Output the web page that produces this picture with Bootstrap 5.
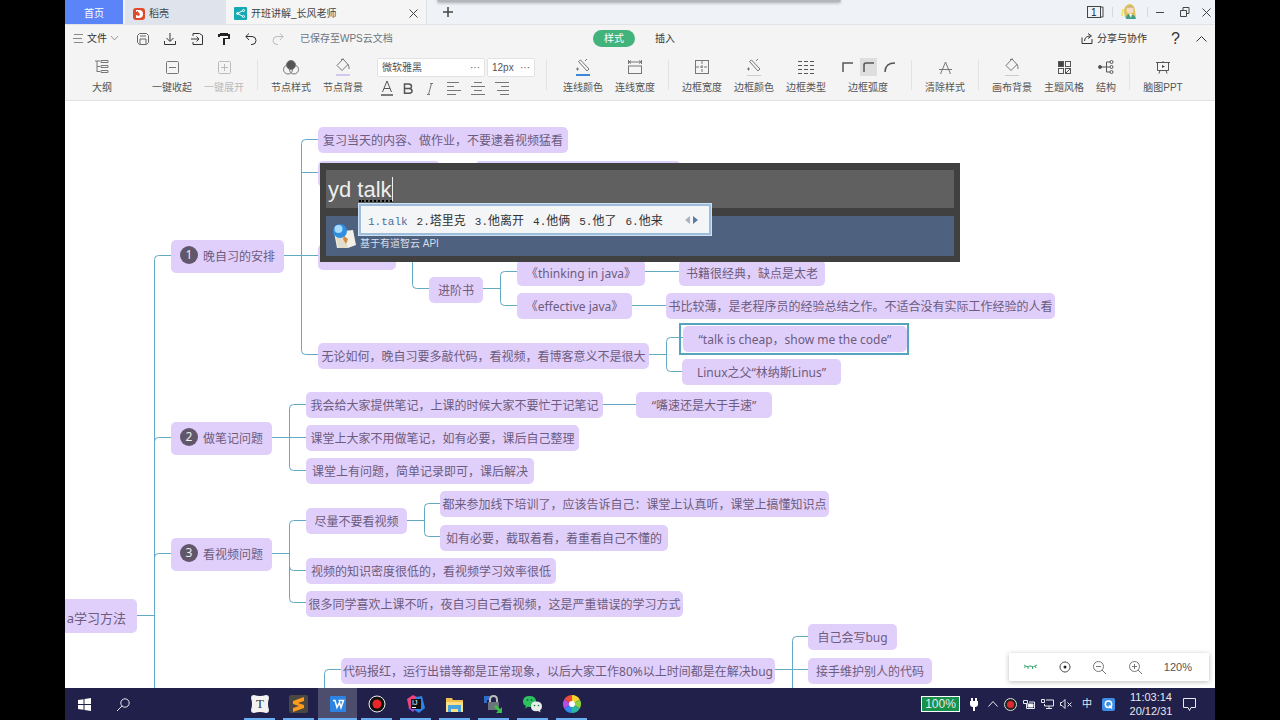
<!DOCTYPE html>
<html lang="zh-CN">
<head>
<meta charset="utf-8">
<meta name="viewport" content="width=device-width, initial-scale=1">
<title>开班讲解_长风老师</title>
<link href="https://cdn.jsdelivr.net/npm/bootstrap@5.3.0/dist/css/bootstrap.min.css" rel="stylesheet">
<style>
body{background:#000;font:10px/14px "Liberation Sans","Noto Sans CJK SC",sans-serif;color:#555}
.desktop{padding:0 65px}
button{background:none;border:0;padding:0;color:inherit;font:inherit}
svg{display:block;flex:none;overflow:visible}
svg:not([stroke]){stroke:currentColor}
svg:not([fill]){fill:none}
/* window title bar */
.titlebar{height:24px;background:#eff3f8;color:#444}
.home-tab{width:58px;background:#5b84f8;color:#fff;padding-top:3px}
.doc-tab{width:101px;background:#dfe4ec;margin-left:2px;padding:3px 0 0 8px}
.doc-tab.active{width:201px;background:#f5f5f5;margin-left:0;padding:3px 8px 0;border-right:1px solid #dde1e6}
.behind-edge{position:absolute;left:372px;top:0;width:404px;height:2px;background:#b4b7ba;border-radius:0 0 4px 4px;box-shadow:0 1px 3px #999}
.rule{width:1px;height:10px;background:#d5d8dc}
/* menu row */
.menubar{height:28px;background:#f4f4f4;color:#333;border-top:1px solid #e0e3e7}
.menubar .side{flex:1 1 0}
.quick{gap:15px;padding-left:3px}
.pill{width:42px;height:17px;border-radius:9px;background:#43b37c;color:#fff}
/* toolbar */
.toolbar{height:49px;background:#f4f4f4;border-bottom:1px solid #e2e2e2;padding-left:11px}
.tool{width:52px;padding-top:6px;flex:none;white-space:nowrap}
.tool.outline-tool{margin-right:18px}
.tool.off{color:#bbb}
.tool .glyph{height:18px;margin-bottom:5px;display:flex;align-items:center;justify-content:center}
.tool.wide{width:72px}.tool.slim{width:32px}
.divide{width:15px;flex:none;display:flex;justify-content:center}
.divide::before{content:"";width:1px;height:30px;margin-top:8px;background:#e3e3e3}
.divide.wide{width:22px}
.fonts{width:158px;margin-left:8px;padding-top:6px;flex:none}
.format-row{gap:10px}
.field{height:19px;background:#fff;border:1px solid #e2e2e2;border-radius:2px;padding:0 4px}
.field select{appearance:none;border:0;background:none;font:inherit;color:#555;min-width:0;padding:0;flex:1}
.field.big{width:108px}.field.small-box{width:48px}
/* mind map canvas */
.canvas{background:#fff;min-height:0}
.links{position:absolute;left:0;top:0;width:1150px;height:587px;color:#62a9c4}
.node{position:absolute;left:var(--x);top:var(--y);width:var(--w);height:26px;border-radius:5px;background:#e1cffb;color:#6c5c7d;font:12px/28px "Noto Sans","Noto Sans CJK SC",sans-serif;text-align:center;white-space:nowrap}
.node.topic{height:33px;line-height:34px;display:flex;align-items:center;justify-content:center;gap:5px}
.node.root{height:34px;line-height:38px;font-size:13px;border-radius:0 5px 5px 0;text-align:right;padding-right:11px;overflow:hidden}
.num{width:18px;height:18px;border-radius:50%;background:#62566b;color:#eee;line-height:18px;margin-bottom:4px}
.node.selected::after{content:"";position:absolute;inset:-3px -2px -3px -4px;border:2px solid #55a3bf}
.zoombar{position:absolute;right:6px;bottom:7px;width:200px;height:28px;background:#fff;box-shadow:0 1px 5px #bbb;padding:0 17px 0 15px;font-size:11px}
/* launcher */
.launcher{position:absolute;left:255px;top:62px;width:640px;background:#404040;padding:7px 6px 6px}
.query{height:38px;background:#606060;position:relative;margin-bottom:8px}
.query input{width:100%;height:38px;border:0;outline:0;background:none;color:#eee;font-size:22px;padding:2px 2px 0}
.compose{position:absolute;left:33px;top:30px;width:33px;border-bottom:2px dotted #000}
.caret{position:absolute;left:66px;top:7px;width:1px;height:24px;background:#eee}
.result{height:40px;background:#4e617f;color:#d8deea;padding-left:5px}
.result .info{align-self:flex-end;padding-bottom:5px}
.ime{position:absolute;left:38px;top:40px;width:354px;height:33px;background:#f4f5f7;border:1px solid #cfe2f5;outline:2px solid #9dbddb;outline-offset:-3px;padding:0 13px 0 9px;color:#333;font:12px "Noto Sans CJK SC",sans-serif;gap:9px;white-space:nowrap}
.ime b{font:11px "Liberation Mono",monospace}
.ime .first{color:#4a6f9c}
/* taskbar */
.taskbar{height:32px;background:#20204a;color:#e8e8f0;flex:none}
.task{width:39px;height:32px;display:flex;align-items:center;justify-content:center;position:relative}
.task.open::after{content:"";position:absolute;left:4px;right:4px;bottom:0;height:2px;background:#69aef2}
.task.current{background:#4d4d6e}.task.current::after{left:0;right:0}
.start-gap{margin-right:97px}
.tray{gap:6px;padding-right:19px}
.battery{width:39px;height:16px;background:#17924a;border:1px solid #fff;line-height:14px;font-size:12px;text-align:center}
.clock{font-size:11px;width:44px;text-align:center}
</style>
</head>
<body>
<div class="desktop d-flex flex-column vh-100 overflow-hidden">
<header>
 <div class="titlebar d-flex position-relative">
  <button class="home-tab">首页</button>
  <button class="doc-tab d-flex align-items-center gap-1"><svg width="12" height="12" stroke="none"><rect width="12" height="12" rx="3" fill="#e04a2b"/><path d="M3 2h3a4 4 0 0 1 0 8H3V7l3 1 1-2-2-2 0-1-2 1z" fill="#fff"/></svg>稻壳</button>
  <div class="doc-tab active d-flex align-items-center gap-1"><svg width="13" height="13"><rect width="13" height="13" rx="1" fill="#16aab4" stroke="none"/><g stroke="#fff"><path d="M9 3.500 3.500 6.500 9 9.500"/><circle cx="9.500" cy="3.500" r="1"/><circle cx="9.500" cy="9.500" r="1"/><circle cx="3.500" cy="6.500" r="1"/></g></svg><span>开班讲解_长风老师</span><button class="ms-auto" aria-label="关闭标签"><svg width="9" height="9"><path d="M.5.5l8 8m0-8l-8 8"/></svg></button></div>
  <button class="ms-3 me-auto" aria-label="新建"><svg width="10" height="10" stroke-width="1.500"><path d="M5 0v10M0 5h10"/></svg></button>
  <div class="d-flex align-items-center gap-2 pe-1">
   <button aria-label="窗口数量"><svg width="17" height="12"><path d="M14 1h2v10h-2"/><rect x=".5" y=".5" width="13" height="11"/><text x="4" y="9.500" font-size="10" fill="#222" stroke="none">1</text></svg></button>
   <span class="rule"></span>
   <button aria-label="账户"><svg width="18" height="18" stroke="none"><path d="M3 8Q3 2 9 1q5 1 5 7l1 7H4z" fill="#dcc15c"/><path d="M2 6 1 13" stroke="#f0e66b" stroke-width="2"/><circle cx="9" cy="7" r="3.500" fill="#f5dcc4"/><path d="M6 5q3-3 6 0l-3-1z" fill="#8a6a35"/><path d="M5 16q0-5 4-5t6 5z" fill="#3d9c87"/><path d="M8 11l2 4 1-4z" fill="#fff"/></svg></button>
   <span class="rule"></span>
   <button class="me-1" aria-label="最小化"><svg width="8" height="8"><path d="M0 4.500h8"/></svg></button>
   <button class="ms-1" aria-label="还原"><svg width="10" height="10"><path d="M.5 3.500h6v6h-6zM3 3.500v-3h6v6H6.500"/></svg></button>
   <button class="ms-1" aria-label="关闭"><svg width="9" height="9"><path d="M.5.5l8 8m0-8l-8 8"/></svg></button>
  </div>
  <div class="behind-edge"></div>
 </div>
 <nav class="menubar d-flex align-items-center">
  <div class="side d-flex align-items-center">
   <button class="d-flex align-items-center gap-1 ms-2"><svg width="10" height="9" stroke="#888"><path d="M1 .5h9M0 4.500h9M1 8.500h9"/></svg>文件<svg width="7" height="5" stroke="#999"><path d="M0 0l3.500 4L7 0"/></svg></button>
   <div class="quick d-flex align-items-center ms-3">
    <button aria-label="保存"><svg width="12" height="12" stroke="#666"><path d="M2.500.5h7l2 2v7l-2 2h-7l-2-2v-7zM3 11V6h6v5M3 3h6"/></svg></button>
    <button aria-label="下载"><svg width="12" height="12"><path d="M6 0v8M2.500 5 6 8.500 9.500 5M.5 8v3.500h11V8"/></svg></button>
    <button aria-label="导出"><svg width="12" height="12"><path d="M2 3V.5h6.500l3 2V11.500H2V9M0 6h8M5.500 3.500 8 6 5.500 8.500"/></svg></button>
    <button aria-label="格式刷"><svg width="12" height="12" fill="#222" stroke="none"><path d="M2 0h8v1h2v5H7v6H5V5h5V3H2V4H0V1h2z"/></svg></button>
    <button aria-label="撤销"><svg width="12" height="12"><path d="M4 .5.8 3.500 4 7M1 3.500h6q4 0 4 4T7 11.500H6"/></svg></button>
    <button aria-label="重做"><svg width="12" height="12" stroke="#bbb"><path d="M8 .5l3.200 3L8 7M11 3.500H5q-4 0-4 4t4 4h1"/></svg></button>
   </div>
   <span class="ms-3 text-secondary">已保存至WPS云文档</span>
  </div>
  <button class="pill">样式</button><button class="ms-3 px-1">插入</button>
  <div class="side d-flex align-items-center justify-content-end pe-2">
   <button class="d-flex align-items-center gap-1 me-3 pe-1"><svg width="12" height="11"><path d="M1 4.500v6h10V6M3.500 8Q4 3 9 3M7 .5 10.500 3 7 5.500"/></svg>分享与协作</button>
   <button class="fs-6 me-3 ms-1" aria-label="帮助">?</button>
   <button aria-label="收起功能区"><svg width="11" height="6"><path d="M.5 5.500l5-5 5 5"/></svg></button>
  </div>
 </nav>
 <div class="toolbar d-flex overflow-hidden">
  <button class="tool outline-tool align-self-start"><span class="glyph"><svg width="14" height="14" stroke="#777"><path d="M0 1h5M2 1v11M2 6.500h3M2 11.500h3"/><path d="M6 .5h7v2H6zM6 5.500h7v2H6zM6 10.500h7v2H6z"/></svg></span>大纲</button>
  <button class="tool align-self-start"><span class="glyph"><svg width="13" height="13" stroke="#777"><rect x=".5" y=".5" width="12" height="12" rx="1"/><path d="M3 6.500h7"/></svg></span>一键收起</button>
  <button class="tool off align-self-start"><span class="glyph"><svg width="13" height="13"><rect x=".5" y=".5" width="12" height="12" rx="1"/><path d="M3 6.500h7M6.500 3v7"/></svg></span>一键展开</button>
  <span class="divide"></span>
  <button class="tool align-self-start"><span class="glyph"><svg width="16" height="15" stroke="#777"><circle cx="5" cy="9.500" r="4.500"/><circle cx="11" cy="9.500" r="4.500"/><circle cx="8" cy="5" r="4.500" fill="#555"/></svg></span>节点样式</button>
  <button class="tool align-self-start"><span class="glyph"><svg width="16" height="18" stroke="#777"><path d="M2 7.500 8 1l5 5.500-6 6zM6 1.500 9 1M12.500 6q2 2 1.500 5"/><path d="M1 17h14" stroke="#d3c9ee" stroke-width="2"/></svg></span>节点背景</button>
  <div class="fonts">
   <div class="d-flex justify-content-between">
    <div class="field big d-flex align-items-center"><select aria-label="字体"><option>微软雅黑</option></select><span>···</span></div>
    <div class="field small-box d-flex align-items-center"><select aria-label="字号"><option>12px</option></select><span>···</span></div>
   </div>
   <div class="format-row d-flex align-items-center pt-1 ps-1">
    <button aria-label="字体颜色"><svg width="12" height="15"><path d="M1.500 11 6 0l4.500 11M3 7.500h6"/><path d="M0 14h12" stroke-width="1.500"/></svg></button>
    <button aria-label="加粗"><svg width="10" height="11" stroke-width="1.500"><path d="M1.500 1h4q3 0 3 2.300T5.500 5.500h-4zM1.500 5.500h4.500q3 0 3 2.400T6 10.200H1.500z"/></svg></button>
    <button class="px-1" aria-label="斜体"><svg width="6" height="12" stroke="#777"><path d="M3 .5h3M0 11.500h3M4.500.5l-3 11"/></svg></button>
    <button aria-label="左对齐"><svg width="14" height="13" stroke="#777"><path d="M0 .5h12M0 4.500h7M0 8.500h14M0 12.500h9"/></svg></button>
    <button aria-label="居中"><svg width="14" height="13" stroke="#777"><path d="M3 .5h8M0 4.500h14M3 8.500h8M0 12.500h14"/></svg></button>
    <button aria-label="右对齐"><svg width="14" height="13" stroke="#777"><path d="M0 .5h14M6 4.500h8M2 8.500h12M5 12.500h9"/></svg></button>
   </div>
  </div>
  <span class="divide wide"></span>
  <button class="tool align-self-start"><span class="glyph"><svg width="16" height="18" stroke="#777"><path d="M3.500 3.500 5.500 2 14 11l-2 2zM10 3l2-2M1 11h3M2.500 9.500v3"/><path d="M1 17h14" stroke="#3f86d8" stroke-width="2"/></svg></span>连线颜色</button>
  <button class="tool align-self-start"><span class="glyph"><svg width="14" height="14" stroke="#777"><rect x=".5" y="6" width="13" height="7.500"/><path d="M.5 0v4M13.500 0v4M1 2h12M3 .5 1 2l2 1.500M11 .5 13 2l-2 1.500"/></svg></span>连线宽度</button>
  <span class="divide"></span>
  <button class="tool align-self-start"><span class="glyph"><svg width="14" height="14" stroke="#777"><rect x=".5" y=".5" width="13" height="13"/><path d="M7 1v12M1 7h12" stroke-dasharray="3 1"/></svg></span>边框宽度</button>
  <button class="tool align-self-start"><span class="glyph"><svg width="16" height="18" stroke="#777"><path d="M3.500 3.500 5.500 2 14 11l-2 2zM10 3l2-2M1 11h3M2.500 9.500v3"/><path d="M1 17.500h14" stroke="#ccc"/></svg></span>边框颜色</button>
  <button class="tool align-self-start"><span class="glyph"><svg width="16" height="14"><path d="M0 1.500h16M0 5.500h16M0 9.500h16M0 13.500h16" stroke-dasharray="4 2"/></svg></span>边框类型</button>
  <button class="tool wide align-self-start"><span class="glyph gap-1"><svg width="17" height="18" stroke-width="1.500"><path d="M4 14V5h10"/></svg><svg width="17" height="18" stroke-width="1.500"><rect width="17" height="18" fill="#dedede" stroke="none"/><path d="M4 14V7q0-2 2-2h8"/></svg><svg width="17" height="18" stroke-width="1.500"><path d="M4 14q0-9 10-9"/></svg></span>边框弧度</button>
  <span class="divide"></span>
  <button class="tool align-self-start"><span class="glyph"><svg width="13" height="13" stroke="#777"><path d="M1.500 13 6.500 1l5 12M0 8.500h13"/></svg></span>清除样式</button>
  <span class="divide"></span>
  <button class="tool align-self-start"><span class="glyph"><svg width="16" height="18" stroke="#777"><path d="M2 7.500 8 1l5 5.500-6 6zM6 1.500 9 1M12.500 6q2 2 1.500 5"/><path d="M1 17.500h14" stroke="#ccc"/></svg></span>画布背景</button>
  <button class="tool align-self-start"><span class="glyph"><svg width="13" height="13"><rect x=".5" y=".5" width="5" height="5" fill="#444"/><rect x="7.500" y=".5" width="5" height="5"/><rect x=".5" y="7.500" width="5" height="5"/><rect x="7.500" y="7.500" width="5" height="5"/><path d="M8 12l4-4"/></svg></span>主题风格</button>
  <button class="tool slim align-self-start"><span class="glyph"><svg width="16" height="14"><circle cx="2" cy="7" r="1.500" fill="#555"/><path d="M3 7h9M12 2H8.500v10H12"/><circle cx="13.500" cy="2" r="1.500"/><circle cx="13.500" cy="7" r="1.500"/><circle cx="13.500" cy="12" r="1.500"/></svg></span>结构</button>
  <span class="divide"></span>
  <button class="tool align-self-start"><span class="glyph"><svg width="14" height="13"><path d="M0 1.500h14M1.500 1.500v8h11v-8M4 9.500 3 12.500M10 9.500l1 3M7 0v1"/><path d="M6 4v3l3-1.500z" fill="#444" stroke="none"/></svg></span>脑图PPT</button>
 </div>
</header>

<main class="canvas flex-grow-1 position-relative overflow-hidden">
 <svg class="links" viewBox="65 101 1150 587" aria-hidden="true">
  <path d="M137 615.500H154.500M154.500 690V259.500q0-4 4-4H171M154.500 441.500q0-4 4-4H171M154.500 557.500q0-4 4-4H171"/>
  <path d="M284 255.500H318M318 139.500H305.500q-4 0-4 4V350.500q0 4 4 4H318M301.500 172.500H318"/>
  <path d="M412.500 255V284.500q0 4 4 4H429M483 288.500H500.500M517 271.500H504.500q-4 0-4 4V301.500q0 4 4 4H517M645 271.500H679M632 305.500H666"/>
  <path d="M649 354.500H666M683 337.500H670.500q-4 0-4 4V367.500q0 4 4 4H683"/>
  <path d="M272 437.500H306M306 404.500H293.500q-4 0-4 4V466.500q0 4 4 4H306M603 404.500H636"/>
  <path d="M272 553.500H289.500M306 520.500H293.500q-4 0-4 4V598.500q0 4 4 4H306M289.500 566.500q0 4 4 4H306M407 520.500H424M440 503.500H428.500q-4 0-4 4V532.500q0 4 4 4H440"/>
  <path d="M341 669.500H328.500q-4 0-4 4V690M775 669.500H808M808 636.500H796.500q-4 0-4 4V690"/>
 </svg>
 <div class="node" style="--x:253px;--y:26px;--w:250px">复习当天的内容、做作业，不要逮着视频猛看</div>
 <div class="node" style="--x:253px;--y:60px;--w:122px"></div>
 <div class="node" style="--x:410px;--y:60px;--w:206px"></div>
 <div class="node" style="--x:253px;--y:143px;--w:78px"></div>
 <div class="node topic" style="--x:106px;--y:139px;--w:113px"><span class="num">1</span>晚自习的安排</div>
 <div class="node" style="--x:452px;--y:159px;--w:128px">《thinking in java》</div>
 <div class="node" style="--x:614px;--y:159px;--w:146px">书籍很经典，缺点是太老</div>
 <div class="node" style="--x:364px;--y:176px;--w:54px">进阶书</div>
 <div class="node" style="--x:452px;--y:192px;--w:115px">《effective java》</div>
 <div class="node" style="--x:601px;--y:192px;--w:389px">书比较薄，是老程序员的经验总结之作。不适合没有实际工作经验的人看</div>
 <div class="node" style="--x:253px;--y:242px;--w:331px">无论如何，晚自习要多敲代码，看视频，看博客意义不是很大</div>
 <div class="node selected" style="--x:618px;--y:225px;--w:224px">“talk is cheap，show me the code”</div>
 <div class="node" style="--x:617px;--y:258px;--w:159px">Linux之父“林纳斯Linus”</div>
 <div class="node topic" style="--x:106px;--y:321px;--w:101px"><span class="num">2</span>做笔记问题</div>
 <div class="node" style="--x:241px;--y:291px;--w:297px">我会给大家提供笔记，上课的时候大家不要忙于记笔记</div>
 <div class="node" style="--x:571px;--y:291px;--w:136px">“嘴速还是大于手速”</div>
 <div class="node" style="--x:241px;--y:324px;--w:273px">课堂上大家不用做笔记，如有必要，课后自己整理</div>
 <div class="node" style="--x:241px;--y:357px;--w:228px">课堂上有问题，简单记录即可，课后解决</div>
 <div class="node topic" style="--x:106px;--y:437px;--w:101px"><span class="num">3</span>看视频问题</div>
 <div class="node" style="--x:241px;--y:407px;--w:101px">尽量不要看视频</div>
 <div class="node" style="--x:375px;--y:390px;--w:389px">都来参加线下培训了，应该告诉自己：课堂上认真听，课堂上搞懂知识点</div>
 <div class="node" style="--x:375px;--y:424px;--w:228px">如有必要，截取着看，着重看自己不懂的</div>
 <div class="node" style="--x:241px;--y:457px;--w:250px">视频的知识密度很低的，看视频学习效率很低</div>
 <div class="node" style="--x:241px;--y:490px;--w:377px">很多同学喜欢上课不听，夜自习自己看视频，这是严重错误的学习方式</div>
 <div class="node root" style="--x:0px;--y:498px;--w:72px">a学习方法</div>
 <div class="node" style="--x:276px;--y:557px;--w:434px">代码报红，运行出错等都是正常现象，以后大家工作80%以上时间都是在解决bug</div>
 <div class="node" style="--x:743px;--y:523px;--w:89px">自己会写bug</div>
 <div class="node" style="--x:743px;--y:557px;--w:124px">接手维护别人的代码</div>

 <div class="launcher">
  <div class="query"><input type="text" value="yd talk" aria-label="搜索" spellcheck="false"><span class="compose"></span><span class="caret"></span></div>
  <div class="result d-flex align-items-center gap-1">
   <svg width="25" height="26" stroke="none"><path d="M3 9 22 7l3 15-8 3H6z" fill="#f3efe4"/><path d="M5 15l9-2 3 12H7z" fill="#e3ddcb"/><path d="M13 13l4 3-2 5-3-5z" fill="#d28a3c"/><circle cx="9" cy="8" r="7" fill="#2f8fe0"/><circle cx="7.500" cy="6" r="4" fill="#a8dcff"/></svg>
   <span class="info">基于有道智云 API</span>
  </div>
  <div class="ime d-flex align-items-center">
   <span class="first"><b>1.talk</b></span><span><b>2.</b>塔里克</span><span><b>3.</b>他离开</span><span><b>4.</b>他俩</span><span><b>5.</b>他了</span><span><b>6.</b>他来</span>
   <svg class="ms-auto" width="13" height="8" stroke="none"><path d="M5 0v8L0 4z" fill="#aab4c0"/><path d="M8 0v8l5-4z" fill="#5a7ba6"/></svg>
  </div>
 </div>

 <div class="zoombar d-flex align-items-center justify-content-between">
  <button aria-label="护眼"><svg width="13" height="6" stroke="#3aa66f"><path d="M0 1q3 3 6 1 3 2 7-1M1.500 2 .5 4M4 3v2M8.500 3v2M11 2l1 2"/></svg></button>
  <button aria-label="定位"><svg width="12" height="12"><circle cx="6" cy="6" r="5"/><circle cx="6" cy="6" r="1.500" fill="#222" stroke="none"/><path d="M6 0v2M6 10v2M0 6h2M10 6h2" stroke="#999"/></svg></button>
  <button aria-label="缩小"><svg width="13" height="13" stroke="#777"><circle cx="5.500" cy="5.500" r="5"/><path d="M9 9l4 4M3 5.500h5"/></svg></button>
  <button aria-label="放大"><svg width="13" height="13" stroke="#777"><circle cx="5.500" cy="5.500" r="5"/><path d="M9 9l4 4M3 5.500h5M5.500 3v5"/></svg></button>
  <span>120%</span>
 </div>
</main>

<footer class="taskbar d-flex align-items-center">
 <button class="task" aria-label="开始"><svg width="13" height="13" fill="#fff" stroke="none"><path d="M0 2l5.500-.8V6H0zM6.500 1 13 0v6H6.500zM0 7h5.500v4.800L0 11zM6.500 7H13v6l-6.500-1z"/></svg></button>
 <button class="task start-gap" aria-label="搜索"><svg width="13" height="13"><circle cx="8" cy="5" r="4.200"/><path d="M5 8 0 13"/></svg></button>
 <button class="task open" aria-label="Typora"><svg width="18" height="18"><path d="M3 0q6 2 12 0 3 0 3 3-2 6 0 12 0 3-3 3-6-2-12 0-3 0-3-3 2-6 0-12 0-3 3-3z" fill="#f2f2f2" stroke="none"/><text x="5" y="13" font-size="13" font-family="Liberation Serif" fill="#333" stroke="none">T</text></svg></button>
 <button class="task open" aria-label="Sublime Text"><svg width="19" height="18" stroke="none"><rect width="19" height="18" rx="2" fill="#4a4743"/><path d="M4 6 15 2v4L9 8l6 2v3L4 17v-4l6-2-6-2z" fill="#ff9a1a"/></svg></button>
 <button class="task open current" aria-label="WPS"><svg width="16" height="16"><rect width="16" height="16" rx="1" fill="#2d83e2" stroke="none"/><path d="M3 4.500h2l2 7 2.500-5 1.500 5 2.500-7H8.500" stroke="#fff" stroke-width="1.500"/></svg></button>
 <button class="task open" aria-label="录制"><svg width="18" height="18"><circle cx="9" cy="9" r="8" fill="#111" stroke="#eee"/><circle cx="9" cy="9" r="4.500" fill="#e8262b" stroke="none"/></svg></button>
 <button class="task open" aria-label="IntelliJ IDEA"><svg width="18" height="18" stroke="none"><path d="M0 4 6 0l6 3-3 12-7-2z" fill="#f0447b"/><path d="M9 2l6-1 3 12-6 5-6-4z" fill="#2b82e8"/><path d="M1 13l5 4 3-4z" fill="#9a4fd6"/><rect x="4" y="4" width="10" height="10" fill="#111"/><text x="5" y="10" font-size="7" fill="#fff">IJ</text><path d="M5 12h4v1H5z" fill="#fff"/></svg></button>
 <button class="task open" aria-label="文件资源管理器"><svg width="17" height="15" stroke="none"><path d="M0 1h6l1 2h10v12H0z" fill="#f3c04d"/><path d="M0 5h17v10H0z" fill="#ffdf85"/><path d="M2 8h13v7h-3v-3H5v3H2z" fill="#4aa4dc"/></svg></button>
 <button class="task open" aria-label="远程工具"><svg width="19" height="18" stroke="none"><path d="M0 1h6v4H3v3H0z" fill="#2d6cc7"/><path d="M6 7V5q0-4 3.500-4T13 5v2" stroke="#bbb" stroke-width="2"/><rect x="4" y="7" width="11" height="8" fill="#6d737a"/><path d="M12 10l4 4 2-2v6h-6l2-2-4-4z" fill="#38c04b"/></svg></button>
 <button class="task open" aria-label="微信"><svg width="19" height="17" stroke="none"><path d="M6.500 0q6.500 0 6.500 5.500T6.500 11L5 10.700 2 12.500 3 10Q0 8.500 0 5.500 0 0 6.500 0z" fill="#2fc15f"/><path d="M13 5.500q6 0 6 5 0 2.500-2 3.800l.5 2-2.500-1.200q-7 .9-7-4.600 0-5 5-5z" fill="#e9eee9"/><g fill="#174"><circle cx="4.500" cy="4" r="1"/><circle cx="8.500" cy="4" r="1"/><circle cx="11.500" cy="9.500" r=".8"/><circle cx="15.500" cy="9.500" r=".8"/></g></svg></button>
 <button class="task open" aria-label="浏览器"><svg width="18" height="18" viewBox="-9 -9 18 18" stroke="none"><path d="M0-9a9 9 0 0 1 7.800 4.500L0 0z" fill="#f9d32f"/><path d="M7.800-4.500a9 9 0 0 1 0 9L0 0z" fill="#8bd13c"/><path d="M7.800 4.500A9 9 0 0 1 0 9V0z" fill="#2fb8a0"/><path d="M0 9a9 9 0 0 1-7.800-4.500L0 0z" fill="#2f8af0"/><path d="M-7.800 4.500a9 9 0 0 1 0-9L0 0z" fill="#b34fe0"/><path d="M-7.800-4.500A9 9 0 0 1 0-9V0z" fill="#f0493e"/><circle r="3" fill="#fff"/></svg></button>
 <div class="tray ms-auto d-flex align-items-center">
  <span class="battery me-1">100%</span>
  <svg width="8" height="13" stroke="none" fill="#fff"><path d="M1 0h2v3h2V0h2v3h1v3q0 3-3 3v4H3V9Q0 9 0 6V3h1z"/></svg>
  <button class="ms-1" aria-label="显示隐藏的图标"><svg width="10" height="6"><path d="M.5 5.500 5 .5l4.500 5"/></svg></button>
  <svg width="13" height="13"><circle cx="6.500" cy="6.500" r="6" fill="#222" stroke="#ddd"/><circle cx="6.500" cy="6.500" r="3.500" fill="#df2b30" stroke="none"/></svg>
  <svg width="12" height="9"><path d="M3.500 3v5.500h8V2H6M.5.5h4v3h-4z"/><path d="M5 4h5v3H5z" fill="#fff"/></svg>
  <svg width="13" height="10"><path d="M5 1h7.500v6H3.500V5M.5.5h3v3h-3zM8 7v2.500M5 9.500h6"/></svg>
  <svg width="12" height="10"><path d="M.5 3.500H2L5 .5v9l-3-3H.5zM7.500 3.500l4 4M11.500 3.500l-4 4"/></svg>
  <span class="mx-1">中</span>
  <svg width="13" height="13"><rect width="13" height="13" rx="2" fill="#3d8ee8" stroke="none"/><circle cx="6.500" cy="6.200" r="3.200" stroke="#fff" stroke-width="1.500"/><path d="M7 7.500 10 10.500" stroke="#fff" stroke-width="1.500"/></svg>
  <div class="clock ms-2">11:03:14<br>20/12/31</div>
  <button class="ms-1" aria-label="通知"><svg width="13" height="13"><path d="M.5.500h12v9H8l-1.500 3L5 9.500H.5z"/></svg></button>
 </div>
</footer>
</div>
<script src="https://cdn.jsdelivr.net/npm/bootstrap@5.3.0/dist/js/bootstrap.bundle.min.js"></script>
</body>
</html>
